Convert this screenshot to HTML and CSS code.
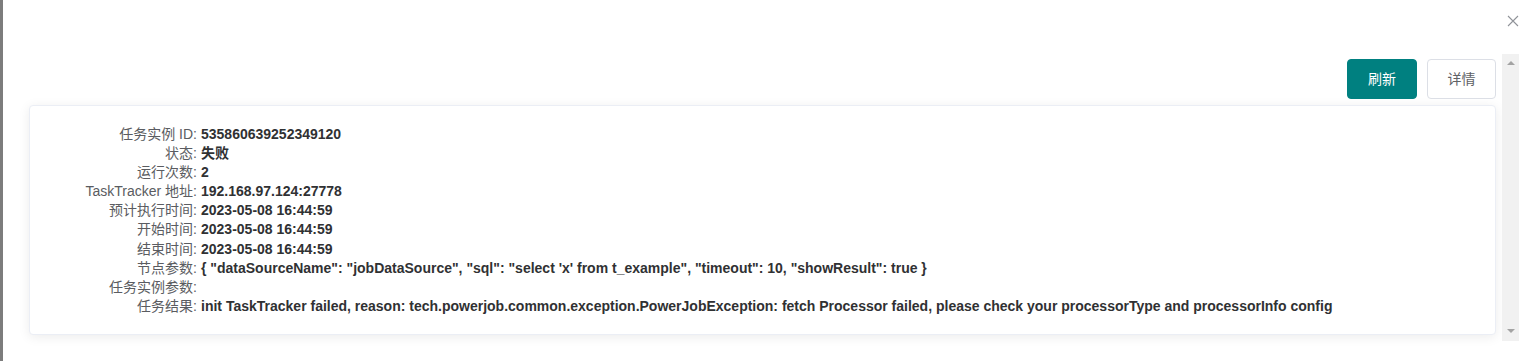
FILE: index.html
```html
<!DOCTYPE html>
<html lang="zh">
<head>
<meta charset="utf-8">
<title>任务实例详情</title>
<link rel="stylesheet" href="styles.css">
</head>
<body>
<div class="page">
  <div class="edge"></div>
  <div class="dialog">
    <div class="dialog-header">
      <button class="close" aria-label="关闭">
        <svg width="12" height="12" viewBox="0 0 12 12"><path d="M1 1L11 11M11 1L1 11" stroke="#909399" stroke-width="1.1" fill="none"/></svg>
      </button>
    </div>
    <div class="dialog-body">
      <div class="scroll-content">
        <div class="toolbar">
          <button class="btn btn-primary">刷新</button>
          <button class="btn btn-default">详情</button>
        </div>
        <div class="card">
          <div class="info">
            <div class="label">任务实例 ID:</div><div class="value">535860639252349120</div>
            <div class="label">状态:</div><div class="value">失败</div>
            <div class="label">运行次数:</div><div class="value">2</div>
            <div class="label">TaskTracker 地址:</div><div class="value">192.168.97.124:27778</div>
            <div class="label">预计执行时间:</div><div class="value">2023-05-08 16:44:59</div>
            <div class="label">开始时间:</div><div class="value">2023-05-08 16:44:59</div>
            <div class="label">结束时间:</div><div class="value">2023-05-08 16:44:59</div>
            <div class="label">节点参数:</div><div class="value">{ "dataSourceName": "jobDataSource", "sql": "select 'x' from t_example", "timeout": 10, "showResult": true }</div>
            <div class="label">任务实例参数:</div><div class="value"></div>
            <div class="label">任务结果:</div><div class="value">init TaskTracker failed, reason: tech.powerjob.common.exception.PowerJobException: fetch Processor failed, please check your processorType and processorInfo config</div>
          </div>
        </div>
      </div>
      <div class="scrollbar">
        <span class="arrow up"></span>
        <span class="arrow down"></span>
      </div>
    </div>
  </div>
</div>
</body>
</html>
```

FILE: styles.css
```css
* { box-sizing: border-box; }
html, body {
  margin: 0;
  padding: 0;
  background: #fff;
  font-family: "Liberation Sans", "Noto Sans CJK SC", Arial, sans-serif;
}
.page {
  display: flex;
  width: 1531px;
  height: 361px;
  overflow: hidden;
}
.edge {
  width: 3px;
  flex: none;
  background: #7c7c7c;
}
.dialog {
  flex: 1;
  display: flex;
  flex-direction: column;
  background: #fff;
}
.dialog-header {
  height: 54px;
  display: flex;
  justify-content: flex-end;
  align-items: flex-start;
  padding: 15px 12px 0 0;
}
.close {
  border: 0;
  background: none;
  padding: 0;
  width: 12px;
  height: 12px;
  display: block;
  cursor: pointer;
}
.close svg { display: block; }
.dialog-body {
  height: 287px;
  display: flex;
  margin-right: 12px;
}
.scroll-content {
  flex: 1;
  padding: 5px 6px 0 26px;
}
.toolbar {
  display: flex;
  justify-content: flex-end;
  gap: 10px;
  margin-bottom: 6px;
}
.btn {
  height: 40px;
  padding: 0;
  display: flex;
  align-items: center;
  justify-content: center;
  white-space: nowrap;
  font-size: 14px;
  line-height: 1;
  border-radius: 4px;
  font-family: "Liberation Sans", "Noto Sans CJK SC", sans-serif;
  cursor: pointer;
}
.btn-primary {
  width: 70px;
  background: #008080;
  border: 1px solid #008080;
  color: #fff;
}
.btn-default {
  width: 69px;
  background: #fff;
  border: 1px solid #dcdfe6;
  color: #606266;
}
.card {
  border: 1px solid #ebeef5;
  border-radius: 4px;
  background: #fff;
  box-shadow: 0 2px 12px 0 rgba(0, 0, 0, 0.08);
  padding: 19px 20px 18px 20px;
}
.info {
  display: grid;
  grid-template-columns: 147px 1fr;
  column-gap: 4px;
  font-size: 14px;
  line-height: 19.1px;
}
.label {
  text-align: right;
  color: #5a5c61;
  white-space: nowrap;
}
.value {
  font-weight: bold;
  color: #303133;
  white-space: nowrap;
  min-height: 19.1px;
}
.scrollbar {
  width: 17px;
  flex: none;
  background: #f1f1f1;
  display: flex;
  flex-direction: column;
  justify-content: space-between;
  align-items: center;
  padding: 7px 0 8px;
}
.arrow {
  width: 0;
  height: 0;
  border-left: 4px solid transparent;
  border-right: 4px solid transparent;
}
.arrow.up { border-bottom: 4px solid #a3a3a3; }
.arrow.down { border-top: 4px solid #a3a3a3; }
```
